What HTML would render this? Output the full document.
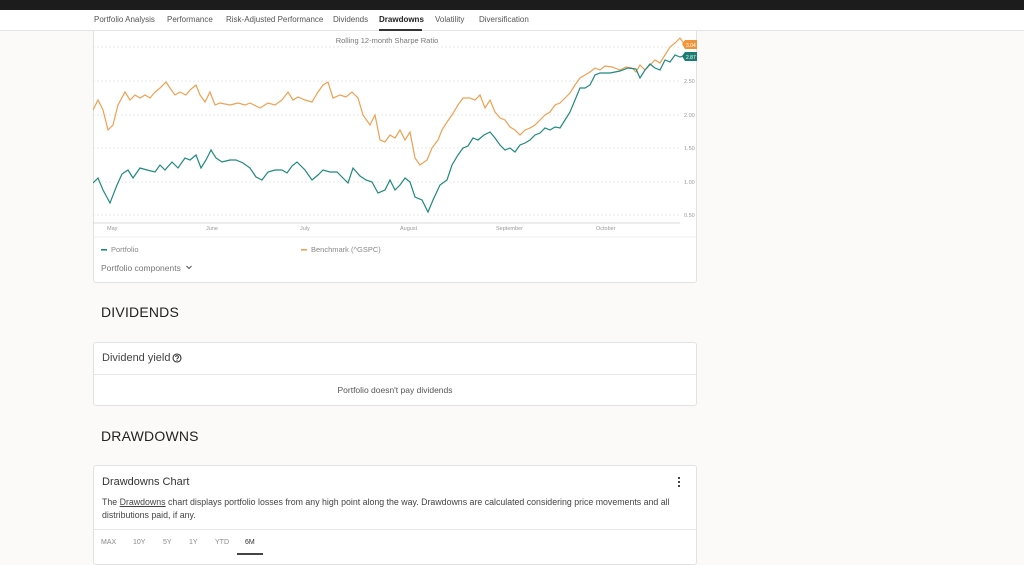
<!DOCTYPE html>
<html><head><meta charset="utf-8"><style>
*{box-sizing:border-box;margin:0;padding:0}
body{width:1024px;height:557px;overflow:hidden;background:#fbfaf8;font-family:"Liberation Sans",sans-serif;color:#333;position:relative}
.top{position:absolute;left:0;top:0;width:1024px;height:10px;background:#1c1c1c}
.nav{position:absolute;left:0;top:10px;width:1024px;height:21px;background:#fff;border-bottom:1px solid #e4e4e4;font-size:8px;color:#555}
.nav span{position:absolute;top:5px}
.nav b{font-weight:bold;color:#222}
.card{position:absolute;left:93px;width:604px;background:#fff;border:1px solid #e2e2e2;border-radius:3px}
.h{position:absolute;left:101px;font-size:14px;color:#222;letter-spacing:.2px}
.tab{position:absolute;top:73px;font-size:7px;color:#888}
</style></head><body>
<div class="top"></div>
<div class="nav">
<span style="left:94px">Portfolio Analysis</span>
<span style="left:167px">Performance</span>
<span style="left:226px">Risk-Adjusted Performance</span>
<span style="left:333px">Dividends</span>
<span style="left:379px"><b>Drawdowns</b></span>
<div style="position:absolute;left:379px;top:19px;width:43px;height:2px;background:#333"></div>
<span style="left:435px">Volatility</span>
<span style="left:479px">Diversification</span>
</div>
<div class="card" style="top:31px;height:252px;border-top:none;border-radius:0 0 3px 3px">
<svg width="604" height="252" style="position:absolute;left:-1px;top:0" viewBox="93 31 604 252">
<text x="387" y="43" font-size="7.5" fill="#777" text-anchor="middle" font-family="Liberation Sans">Rolling 12-month Sharpe Ratio</text>
<g stroke="#e3e3e3" stroke-dasharray="2,2" stroke-width="0.7">
<line x1="93" x2="680" y1="47" y2="47"/><line x1="93" x2="680" y1="81" y2="81"/><line x1="93" x2="680" y1="115" y2="115"/><line x1="93" x2="680" y1="148" y2="148"/><line x1="93" x2="680" y1="182" y2="182"/><line x1="93" x2="680" y1="215" y2="215"/></g>
<line x1="93" x2="680" y1="223" y2="223" stroke="#ccc" stroke-width="0.7"/>
<line x1="93" x2="697" y1="237" y2="237" stroke="#e6e6e6" stroke-width="0.8"/>
<g font-size="5.5" fill="#999" font-family="Liberation Sans">
<text x="684" y="83">2.50</text><text x="684" y="117">2.00</text><text x="684" y="150">1.50</text><text x="684" y="184">1.00</text><text x="684" y="217">0.50</text>
<text x="107" y="230">May</text><text x="206" y="230">June</text><text x="300" y="230">July</text><text x="400" y="230">August</text><text x="496" y="230">September</text><text x="596" y="230">October</text></g>
<polyline fill="none" stroke="#f0a050" stroke-width="1.2" points="93,110 98,100 103,110 108,130 113,125 118,105 125,92 130,100 135,95 140,98 145,95 150,98 155,92 160,88 166,82 170,88 175,95 180,92 186,95 190,90 196,85 200,95 205,102 210,92 215,105 220,103 230,105 238,103 245,105 250,103 260,108 268,103 275,105 282,100 288,92 293,100 298,97 305,100 312,102 318,92 323,85 328,82 333,98 340,95 346,97 352,92 358,98 363,115 370,125 375,115 380,140 385,142 390,135 395,138 400,130 405,140 410,132 415,158 420,165 427,160 432,148 438,140 442,130 447,122 452,115 458,105 463,98 470,98 475,100 480,95 485,108 490,100 495,112 500,118 505,120 510,127 515,130 520,135 525,130 530,128 535,125 540,120 545,115 550,112 555,105 560,103 565,98 570,93 575,85 580,78 585,75 590,72 595,68 600,70 605,66 612,67 620,70 626,67 632,68 636,72 640,65 645,70 650,65 655,60 660,63 665,55 670,47 675,43 680,38 685,45"/>
<polyline fill="none" stroke="#1f8a7e" stroke-width="1.2" points="93,183 98,178 103,190 110,203 117,185 122,174 128,170 133,178 140,168 147,170 155,172 160,165 165,170 172,162 178,168 185,158 190,160 196,155 201,168 206,160 211,150 216,158 222,162 230,160 236,160 243,163 250,168 256,177 262,180 268,172 275,170 282,170 287,173 292,166 297,162 305,170 312,180 318,175 323,170 330,172 337,172 343,178 348,183 353,168 360,176 366,180 372,182 378,193 385,190 390,180 395,190 400,185 405,178 410,182 415,197 422,200 428,212 433,200 440,185 447,180 452,165 458,155 463,148 468,146 473,138 478,140 484,135 490,132 495,138 500,145 505,150 510,148 515,152 520,145 525,143 530,140 535,135 540,133 545,128 550,130 555,127 560,128 565,120 570,112 575,100 580,88 585,88 590,85 595,75 600,73 610,73 620,71 628,68 636,69 640,78 645,70 650,64 655,68 660,70 665,60 670,62 675,55 680,57 684,56"/>
<path d="M682,44 l3,-4 h12 v9 h-12z" fill="#f0953a"/><text x="686" y="47" font-size="5" fill="#fff" font-family="Liberation Sans">3.04</text>
<path d="M682,56 l3,-4 h12 v9 h-12z" fill="#1a7d71"/><text x="686" y="59" font-size="5" fill="#fff" font-family="Liberation Sans">2.87</text>
<rect x="101" y="249" width="6" height="1.6" fill="#1f8a7e"/><text x="111" y="252" font-size="7.5" fill="#888" font-family="Liberation Sans">Portfolio</text>
<rect x="301" y="249" width="6" height="1.6" fill="#f0a050"/><text x="311" y="252" font-size="7.5" fill="#888" font-family="Liberation Sans">Benchmark (^GSPC)</text>
<text x="101" y="271" font-size="8.5" fill="#777" font-family="Liberation Sans">Portfolio components</text>
<path d="M186.5,266 l2.5,2.5 l2.5,-2.5" fill="none" stroke="#555" stroke-width="1.1"/>
</svg>
</div>
<div class="h" style="top:304px">DIVIDENDS</div>
<div class="card" style="top:342px;height:64px">
<div style="position:absolute;left:8px;top:9px;font-size:11px;color:#444">Dividend yield</div>
<svg style="position:absolute;left:78px;top:10px" width="10" height="10" viewBox="0 0 10 10"><circle cx="5" cy="5" r="4" fill="none" stroke="#333" stroke-width="1.1"/><path d="M3.6,4 a1.4,1.4 0 1 1 1.9,1.3 q-0.5,0.3 -0.5,0.9" fill="none" stroke="#333" stroke-width="1"/><circle cx="5" cy="7.3" r="0.6" fill="#333"/></svg>
<div style="position:absolute;left:0;top:31px;width:100%;border-top:1px solid #e6e6e6"></div>
<div style="position:absolute;left:0;top:42px;width:100%;text-align:center;font-size:8.5px;color:#555">Portfolio doesn't pay dividends</div>
</div>
<div class="h" style="top:428px">DRAWDOWNS</div>
<div class="card" style="top:465px;height:100px">
<div style="position:absolute;left:8px;top:10px;font-size:11px;color:#333">Drawdowns Chart</div>
<div style="position:absolute;right:16px;top:11px;width:2px;font-size:0">
<div style="width:2px;height:2px;background:#444;margin-bottom:2px"></div><div style="width:2px;height:2px;background:#444;margin-bottom:2px"></div><div style="width:2px;height:2px;background:#444"></div></div>
<div style="position:absolute;left:8px;top:30px;width:590px;font-size:8.8px;line-height:13px;color:#444">The <u>Drawdowns</u> chart displays portfolio losses from any high point along the way. Drawdowns are calculated considering price movements and all distributions paid, if any.</div>
<div style="position:absolute;left:0;top:63px;width:100%;border-top:1px solid #e6e6e6"></div>
<span class="tab" style="left:7px">MAX</span><span class="tab" style="left:39px">10Y</span><span class="tab" style="left:69px">5Y</span><span class="tab" style="left:95px">1Y</span><span class="tab" style="left:121px">YTD</span><span class="tab" style="left:151px;color:#333">6M</span>
<div style="position:absolute;left:143px;top:87px;width:26px;height:2px;background:#444"></div>
</div>
</body></html>
